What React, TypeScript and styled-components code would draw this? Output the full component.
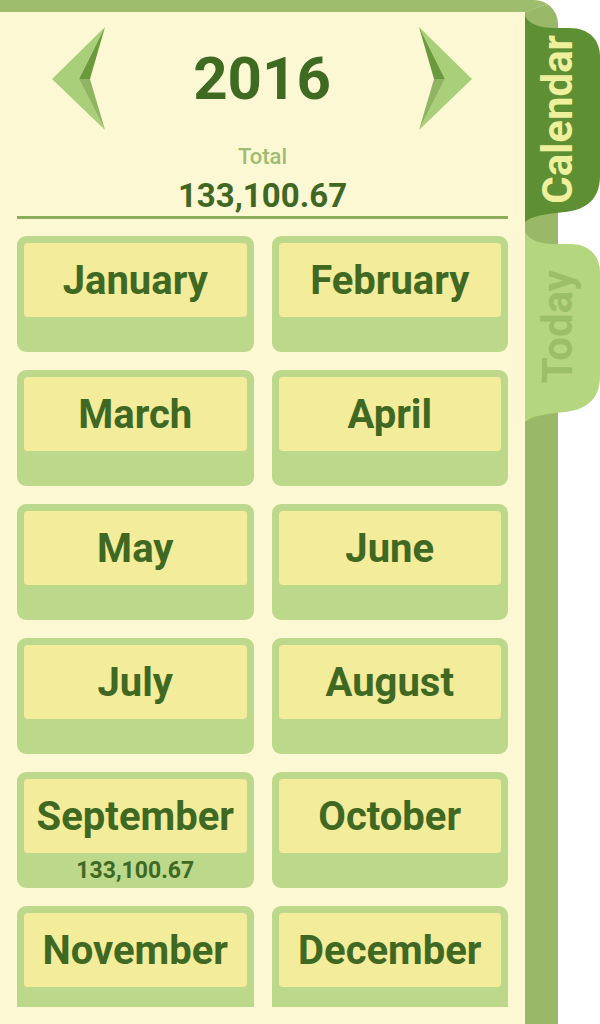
import React from 'react'
import styled, {createGlobalStyle} from 'styled-components'

const GlobalStyle = createGlobalStyle`
  html, body {
    margin: 0;
    padding: 0;
    background: #ffffff;
  }
  body {
    font-family: Roboto, "Liberation Sans", sans-serif;
  }
`

const MONTHS = [
    'January', 'February', 'March', 'April', 'May', 'June',
    'July', 'August', 'September', 'October', 'November', 'December',
]

// totals per month, only September has spending
const TOTALS: { [month: string]: string } = {
    September: '133,100.67',
}

function Arrow(props: { flip?: boolean }) {
    return <ArrowSvg viewBox="0 0 53 103" $flip={props.flip}>
        <polygon points="0,52 53,0 27,52 53,103" fill="#a9cf7b"/>
        <polygon points="53,0 38,52 27,52" fill="#6b9a3c"/>
        <polygon points="27,52 38,52 53,103" fill="#8fb562"/>
    </ArrowSvg>
}

function Tab(props: { label: string, active?: boolean, height: number }) {
    const h = props.height
    const shape = `M0,0 C4,8 14,12 30,12 L45,12 C64,12 75,24 75,40 L75,${h - 46}
        C75,${h - 22} 60,${h - 12} 40,${h - 10} C20,${h - 8} 6,${h - 6} 0,${h} Z`
    return <TabBox $height={h}>
        <TabShape viewBox={`0 0 75 ${h}`} preserveAspectRatio="none">
            <path d={shape} fill={props.active ? '#5e8f33' : '#b4d67e'}/>
        </TabShape>
        <TabLabel $active={props.active}>{props.label}</TabLabel>
    </TabBox>
}

function MonthCard(props: { month: string }) {
    const total = TOTALS[props.month]
    return <Card>
        <CardFace>{props.month}</CardFace>
        <CardFoot>{total}</CardFoot>
    </Card>
}

export default function App() {
    return <>
        <GlobalStyle/>
        <Page>
            <Frame>
                <YearRow>
                    <Arrow/>
                    <Year>2016</Year>
                    <Arrow flip/>
                </YearRow>
                <TotalLabel>Total</TotalLabel>
                <TotalAmount>133,100.67</TotalAmount>
                <Divider/>
                <GridViewport>
                    <MonthGrid>
                        {MONTHS.map(m => <MonthCard key={m} month={m}/>)}
                    </MonthGrid>
                </GridViewport>
            </Frame>
            <TabRail>
                <Tab label="Calendar" active height={206}/>
                <Tab label="Today" height={190}/>
            </TabRail>
        </Page>
    </>
}

const Page = styled.div`
  position: relative;
  width: 600px;
  height: 1024px;
  overflow: hidden;
`

const Frame = styled.div`
  box-sizing: border-box;
  width: 558px;
  height: 1024px;
  background: #fdf8d4;
  border-top: 12px solid #9dbd6c;
  border-right: 33px solid #99b968;
  border-top-right-radius: 24px;
  padding: 0 17px;
  display: flex;
  flex-direction: column;
`

const YearRow = styled.div`
  margin-top: 15px;
  height: 103px;
  display: flex;
  align-items: center;
  justify-content: space-between;
  padding: 0 36px 0 35px;
`

const ArrowSvg = styled.svg<{ $flip?: boolean }>`
  width: 53px;
  height: 103px;
  flex-shrink: 0;
  transform: ${p => p.$flip ? 'scaleX(-1)' : 'none'};
`

const Year = styled.div`
  font-size: 60px;
  font-weight: 700;
  line-height: 1;
  color: #3e6a22;
`

const TotalLabel = styled.div`
  margin-top: 16px;
  text-align: center;
  font-size: 22px;
  line-height: 22px;
  font-weight: 500;
  color: #9dbc74;
`

const TotalAmount = styled.div`
  margin-top: 11px;
  text-align: center;
  font-size: 33px;
  line-height: 33px;
  font-weight: 700;
  color: #3f6824;
`

const Divider = styled.div`
  margin-top: 4px;
  height: 3px;
  background: #8cad5a;
`

const GridViewport = styled.div`
  margin-top: 17px;
  height: 771px;
  overflow: hidden;
`

const MonthGrid = styled.div`
  display: grid;
  grid-template-columns: 1fr 1fr;
  gap: 18px;
`

const Card = styled.div`
  height: 116px;
  box-sizing: border-box;
  padding: 7px 7px 0;
  background: #bcd98b;
  border-radius: 9px;
  display: flex;
  flex-direction: column;
`

const CardFace = styled.div`
  height: 74px;
  background: #f2ec9b;
  border-radius: 4px;
  display: flex;
  align-items: center;
  justify-content: center;
  font-size: 40px;
  font-weight: 700;
  color: #3f6822;
`

const CardFoot = styled.div`
  flex: 1;
  display: flex;
  align-items: center;
  justify-content: center;
  font-size: 23px;
  font-weight: 700;
  color: #3f6822;
`

const TabRail = styled.div`
  position: absolute;
  top: 0;
  right: 0;
  width: 75px;
  display: flex;
  flex-direction: column;
`

const TabBox = styled.div<{ $height: number }>`
  position: relative;
  height: ${p => p.$height}px;
  display: flex;
  align-items: center;
  padding-left: 12px;
  &:first-child {
    margin-top: 16px;
  }
  & + & {
    margin-top: 10px;
  }
`

const TabShape = styled.svg`
  position: absolute;
  inset: 0;
  width: 100%;
  height: 100%;
`

const TabLabel = styled.span<{ $active?: boolean }>`
  position: relative;
  writing-mode: vertical-rl;
  transform: rotate(180deg);
  font-size: 42px;
  line-height: 42px;
  font-weight: 700;
  color: ${p => p.$active ? '#eff09d' : '#9abf66'};
`
